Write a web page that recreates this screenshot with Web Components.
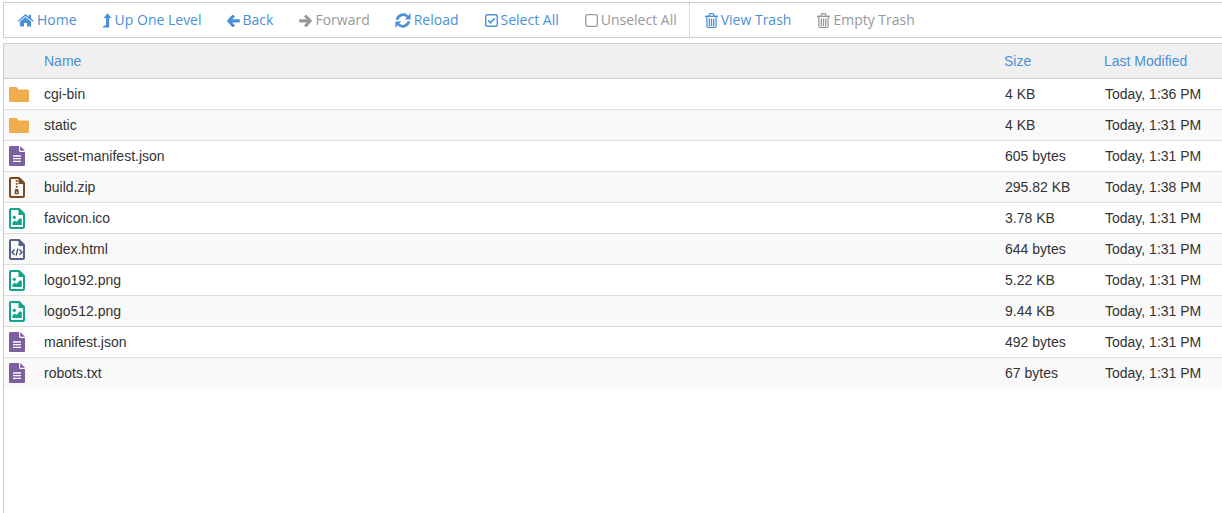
<!DOCTYPE html>
<html><head><meta charset="utf-8"><title>File Manager</title>
<style>
html,body{margin:0;padding:0;background:#fff}
body{width:1222px;height:513px;overflow:hidden}
</style></head><body>
<fm-app></fm-app>
<script>
const TI={
home:'<svg width="17" height="14" viewBox="0 0 17 14"><path fill="currentColor" d="M8.500 1 L11.800 3.700V1.800h2.300v3.800l2.700 2.300-.8.900L8.500 2.900 1.300 8.800l-.8-.9z"/><path fill="currentColor" d="M8.500 4l5.600 4.500v4.300a.6.6 0 0 1-.6.6H10V9.900H7v3.500H3.500a.6.6 0 0 1-.6-.6V8.500z"/></svg>',
up:'<svg width="10" height="15" viewBox="0 0 10 15"><path fill="currentColor" d="M5.600 0.200 9.600 5H7.200v8.400c0 .6-.4 1-1 1H.8l-.2-.4L2.400 12.600H4V5H1.600z"/></svg>',
back:'<svg width="13" height="13" viewBox="0 0 13 13"><path fill="currentColor" d="M6.400.9l1.100 1.100a.9.9 0 0 1 0 1.200L5 5.200h6.900c.6 0 1 .4 1 1v1.400c0 .6-.4 1-1 1H5l2.500 2.100a.9.9 0 0 1 0 1.200l-1.100 1a.9.9 0 0 1-1.200 0L.3 7.500a.9.9 0 0 1 0-1.200L5.200.9a.9.9 0 0 1 1.200 0z"/></svg>',
fwd:'<svg width="13" height="13" viewBox="0 0 13 13"><path fill="currentColor" d="M6.600.9 5.500 2a.9.9 0 0 0 0 1.200L8 5.200H1.100c-.6 0-1 .4-1 1v1.400c0 .6.400 1 1 1H8l-2.500 2.100a.9.9 0 0 0 0 1.200l1.100 1a.9.9 0 0 0 1.200 0l4.900-5.400a.9.9 0 0 0 0-1.200L7.800.9a.9.9 0 0 0-1.200 0z"/></svg>',
reload:'<svg width="16" height="15" viewBox="0 0 16 15"><path fill="currentColor" d="M15.600.6v5.400a.6.6 0 0 1-.6.6H9.600l2.100-2.100a4.900 4.900 0 0 0-8.200 2.200H.8A7.300 7.300 0 0 1 13.400 2.700L15 .6zM.4 14.400V9a.6.6 0 0 1 .6-.6h5.400l-2.100 2.100a4.900 4.900 0 0 0 8.200-2.200h2.700A7.300 7.300 0 0 1 2.600 12.300L1 14.400z"/></svg>',
check:'<svg width="13" height="13" viewBox="0 0 13 13"><rect x=".7" y=".7" width="11.600" height="11.600" rx="1.600" fill="none" stroke="currentColor" stroke-width="1.400"/><path d="M3.200 6.400l2.400 2.400 4.200-4.600" fill="none" stroke="currentColor" stroke-width="1.700"/></svg>',
uncheck:'<svg width="13" height="13" viewBox="0 0 13 13"><rect x=".7" y=".7" width="11.600" height="11.600" rx="1.600" fill="none" stroke="currentColor" stroke-width="1.300"/></svg>',
trash:'<svg width="13" height="15" viewBox="0 0 13 15"><path fill="none" stroke="currentColor" stroke-width="1.200" d="M4.200 3V1.600q0-.9.900-.9h2.800q.9 0 .9.900V3"/><path fill="currentColor" d="M0 2.600h13V4H0z"/><path fill="none" stroke="currentColor" stroke-width="1.200" d="M1.900 4v9.300q0 1.100 1.100 1.100h7q1.100 0 1.100-1.100V4"/><path fill="currentColor" d="M3.700 5.500h1.300V13H3.700zM5.900 5.500h1.300V13H5.900zM8.100 5.500h1.300V13H8.100z"/></svg>'
};
const pg='M2 1h8l5 5v12.500c0 .8-.7 1.500-1.500 1.500h-11.500c-.6 0-1-.5-1-1V2c0-.6.400-1 1-1z';
const fold='M9.500 1h1.500l4 4.500v1.500h-5.500z';
const FI={
folder:'<svg width="20" height="15" viewBox="0 0 20 15"><path fill="#f0ad4e" d="M1.300 0h5.700a1.300 1.300 0 0 1 1 .5L9.500 2.400h9.200A1.300 1.300 0 0 1 20 3.700v10A1.300 1.300 0 0 1 18.700 15H1.300A1.300 1.300 0 0 1 0 13.700V1.300A1.300 1.300 0 0 1 1.300 0z"/></svg>',
text:'<svg width="16" height="20" viewBox="0 0 16 20"><path fill="#7b5f9e" d="M1.300 0H10v4.700c0 .7.500 1.200 1.200 1.200H16v12.800c0 .7-.6 1.300-1.300 1.300H1.300C.6 20 0 19.400 0 18.700V1.300C0 .6.600 0 1.300 0zM11.200 0 16 4.700h-4.800z"/><path stroke="#fff" stroke-width="1.300" d="M4 10h8M4 12.700h8M4 15.400h8"/></svg>',
zip:`<svg width="16" height="21" viewBox="0 0 16 21"><path fill="none" stroke="#7a4a24" stroke-width="2" d="${pg}"/><path fill="#7a4a24" d="${fold}"/><path fill="#7a4a24" d="M6.800 3h1.800v1.800H6.800zM6.800 6h1.800v1.800H6.800zM6.800 9h1.800v1.800H6.800zM6.200 12h3l.6 3.300a1.500 1.500 0 0 1-1.500 1.900h-1.200a1.500 1.500 0 0 1-1.500-1.900z"/><circle cx="7.700" cy="15.200" r=".7" fill="#fff"/></svg>`,
img:`<svg width="16" height="21" viewBox="0 0 16 21"><path fill="none" stroke="#12a58c" stroke-width="2" d="${pg}"/><path fill="#12a58c" d="${fold}"/><circle cx="5.300" cy="9.300" r="1.600" fill="#12a58c"/><path fill="#12a58c" d="M3.500 17v-2.600l2-1.800 1.800 1.500 4-4 1.500 1.500V17z"/></svg>`,
html:`<svg width="16" height="21" viewBox="0 0 16 21"><path fill="none" stroke="#55608f" stroke-width="2" d="${pg}"/><path fill="#55608f" d="${fold}"/><path fill="none" stroke="#3d4570" stroke-width="1.300" d="M5.500 10.500l-2.500 2.700 2.500 2.700M10.500 10.500l2.500 2.700-2.500 2.700M8.900 9.700l-1.800 7"/></svg>`
};

class TbBtn extends HTMLElement{
 connectedCallback(){
  if(this.shadowRoot)return;
  const s=this.attachShadow({mode:'open'});
  const off=this.hasAttribute('disabled');
  s.innerHTML=`<style>
  :host{display:inline-flex;align-items:center;height:34px;margin-right:${this.getAttribute('mr')||25}px;color:${off?'#999':'#4a90d9'};font:14px/20px "Open Sans",sans-serif;white-space:nowrap}
  .i{display:inline-flex;align-items:center;margin-right:3px}
  svg{display:block}
  </style><span class="i">${TI[this.getAttribute('icon')]}</span><slot></slot>`;
 }
}
customElements.define('tb-btn',TbBtn);

class FmToolbar extends HTMLElement{
 constructor(){super();this.attachShadow({mode:'open'}).innerHTML=`<style>
 :host{display:flex;align-items:center;box-sizing:border-box;height:36px;margin:2px 0 0 3px;padding-left:13px;border:1px solid #ccc;border-right:0;background:#fff}
 .sep{align-self:stretch;width:0;border-left:1px dotted #bbb;margin-right:15px}
 </style>
 <tb-btn icon="home">Home</tb-btn>
 <tb-btn icon="up">Up One Level</tb-btn>
 <tb-btn icon="back" mr="26">Back</tb-btn>
 <tb-btn icon="fwd" disabled mr="25">Forward</tb-btn>
 <tb-btn icon="reload" mr="26">Reload</tb-btn>
 <tb-btn icon="check" mr="26">Select All</tb-btn>
 <tb-btn icon="uncheck" disabled mr="12">Unselect All</tb-btn>
 <span class="sep"></span>
 <tb-btn icon="trash" mr="26">View Trash</tb-btn>
 <tb-btn icon="trash" disabled>Empty Trash</tb-btn>`;}
}
customElements.define('fm-toolbar',FmToolbar);

class FmRow extends HTMLElement{
 connectedCallback(){
  if(this.shadowRoot)return;
  const s=this.attachShadow({mode:'open'});
  s.innerHTML=`<style>
  :host{display:grid;grid-template-columns:40px 1fr 100px 117px;align-items:center;box-sizing:border-box;height:31px;border-bottom:1px solid #ddd;font:14px/20px "Liberation Sans",sans-serif;color:#333;background:#fff}
  :host([alt]){background:#f9f9f9}
  :host([last]){border-bottom:0;height:30px}
  .ic{display:flex;padding-left:5px}
  svg{display:block}
  </style><span class="ic">${FI[this.getAttribute('type')]}</span><span>${this.getAttribute('name')}</span><span>${this.getAttribute('size')}</span><span>${this.getAttribute('mod')}</span>`;
 }
}
customElements.define('fm-row',FmRow);

class FmHead extends HTMLElement{
 constructor(){super();this.attachShadow({mode:'open'}).innerHTML=`<style>
 :host{display:grid;grid-template-columns:40px 1fr 100px 118px;align-items:center;box-sizing:border-box;height:36px;background:#f0f0f0;border-top:1px solid #ccc;border-bottom:1px solid #ccc;font:14px/20px "Liberation Sans",sans-serif;color:#4a90d9}
 </style><span></span><span>Name</span><span>Size</span><span>Last Modified</span>`;}
}
customElements.define('fm-head',FmHead);

class FmTable extends HTMLElement{
 constructor(){super();
 const rows=[['folder','cgi-bin','4 KB','1:36'],['folder','static','4 KB','1:31'],['text','asset-manifest.json','605 bytes','1:31'],['zip','build.zip','295.82 KB','1:38'],['img','favicon.ico','3.78 KB','1:31'],['html','index.html','644 bytes','1:31'],['img','logo192.png','5.22 KB','1:31'],['img','logo512.png','9.44 KB','1:31'],['text','manifest.json','492 bytes','1:31'],['text','robots.txt','67 bytes','1:31']];
 this.attachShadow({mode:'open'}).innerHTML=`<style>
 :host{display:block;box-sizing:border-box;margin:5px 0 0 3px;height:470px;border-left:1px solid #ccc}
 </style><fm-head></fm-head>`+rows.map((r,i)=>`<fm-row type="${r[0]}" name="${r[1]}" size="${r[2]}" mod="Today, ${r[3]} PM"${i%2?' alt':''}${i==9?' last':''}></fm-row>`).join('');}
}
customElements.define('fm-table',FmTable);

class FmApp extends HTMLElement{
 constructor(){super();this.attachShadow({mode:'open'}).innerHTML=`<style>:host{display:block;width:1222px;height:513px;overflow:hidden}</style><fm-toolbar></fm-toolbar><fm-table></fm-table>`;}
}
customElements.define('fm-app',FmApp);
</script>
</body></html>
